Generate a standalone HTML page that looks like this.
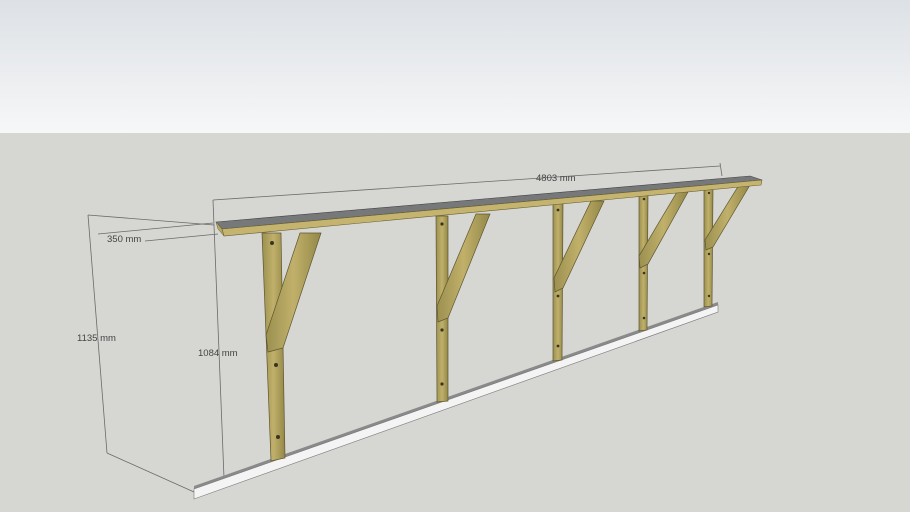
<!DOCTYPE html>
<html><head><style>
html,body{margin:0;padding:0;width:910px;height:512px;overflow:hidden;}
svg{display:block}
text{font-family:"Liberation Sans",sans-serif;font-size:9.5px;fill:#444}
</style></head><body>
<svg width="910" height="512" viewBox="0 0 910 512">
<defs>
<linearGradient id="sky" x1="0" y1="0" x2="0" y2="1">
<stop offset="0" stop-color="#dde1e5"/><stop offset="1" stop-color="#f6f7f8"/>
</linearGradient>
<linearGradient id="wood" x1="0" y1="0" x2="1" y2="0">
<stop offset="0" stop-color="#9c9050"/><stop offset="0.5" stop-color="#c0b06a"/><stop offset="1" stop-color="#948848"/>
</linearGradient>
</defs>
<rect width="910" height="133" fill="url(#sky)"/>
<rect y="133" width="910" height="379" fill="#d6d6d3"/>
<g stroke="#6a6a6a" stroke-width="0.8" fill="none">
<line x1="88" y1="215" x2="107" y2="453"/>
<line x1="107" y1="453" x2="194" y2="492"/>
<line x1="88" y1="215" x2="214" y2="225"/>
<line x1="98" y1="234" x2="213" y2="223"/>
<line x1="145" y1="241" x2="218" y2="234"/>
<line x1="213" y1="200" x2="224" y2="478"/>
<line x1="213" y1="200" x2="720" y2="166"/>
<line x1="720" y1="163" x2="722" y2="176"/>
</g>
<!-- base rail -->
<polygon points="194,486 718,302 718,305 194,489" fill="#8a8a8a"/>
<polygon points="194,489 718,305 718,312 194,499" fill="#f4f4f4" stroke="#777" stroke-width="0.6"/>
<!-- posts & braces -->
<g fill="url(#wood)" stroke="#5c5630" stroke-width="0.7">
<polygon points="262,233 281,233 285,458 271,461"/>
<polygon points="300,233 321,233 283,348 268,352 266,335"/>
<polygon points="436,216 448,216 448,401 437,402"/>
<polygon points="476,214 490,214 448,318 438,322 437,306"/>
<polygon points="553,203 563,203 562,360 553,361"/>
<polygon points="591,201 604,201 563,288 555,292 554,278"/>
<polygon points="639,193 648,193 647,330 639,331"/>
<polygon points="677,192 688,192 648,264 640,268 639,256"/>
<polygon points="704,187 713,187 712,306 704,307"/>
<polygon points="739,185 750,185 713,247 706,250 705,240"/>
</g>
<g fill="#3a3522">
<circle cx="272" cy="243" r="2"/><circle cx="276" cy="365" r="2"/><circle cx="278" cy="437" r="2"/>
<circle cx="442" cy="224" r="1.6"/><circle cx="442" cy="330" r="1.6"/><circle cx="442" cy="384" r="1.6"/>
<circle cx="558" cy="210" r="1.4"/><circle cx="558" cy="296" r="1.4"/><circle cx="558" cy="346" r="1.4"/>
<circle cx="644" cy="199" r="1.3"/><circle cx="644" cy="273" r="1.3"/><circle cx="644" cy="318" r="1.3"/>
<circle cx="709" cy="193" r="1.2"/><circle cx="709" cy="254" r="1.2"/><circle cx="709" cy="296" r="1.2"/>
</g>
<!-- shelf -->
<polygon points="216,222 750,176 762,180 222,229" fill="#76787a" stroke="#444" stroke-width="0.6"/>
<polygon points="216,222 222,229 224,236 218,229" fill="#b8a866" stroke="#6a6030" stroke-width="0.5"/>
<polygon points="222,229 762,180 761,185 224,236" fill="#c4b470" stroke="#6a6030" stroke-width="0.6"/>
<text x="536" y="181">4803 mm</text>
<text x="107" y="242">350 mm</text>
<text x="77" y="341">1135 mm</text>
<text x="198" y="356">1084 mm</text>
</svg>
</body></html>
